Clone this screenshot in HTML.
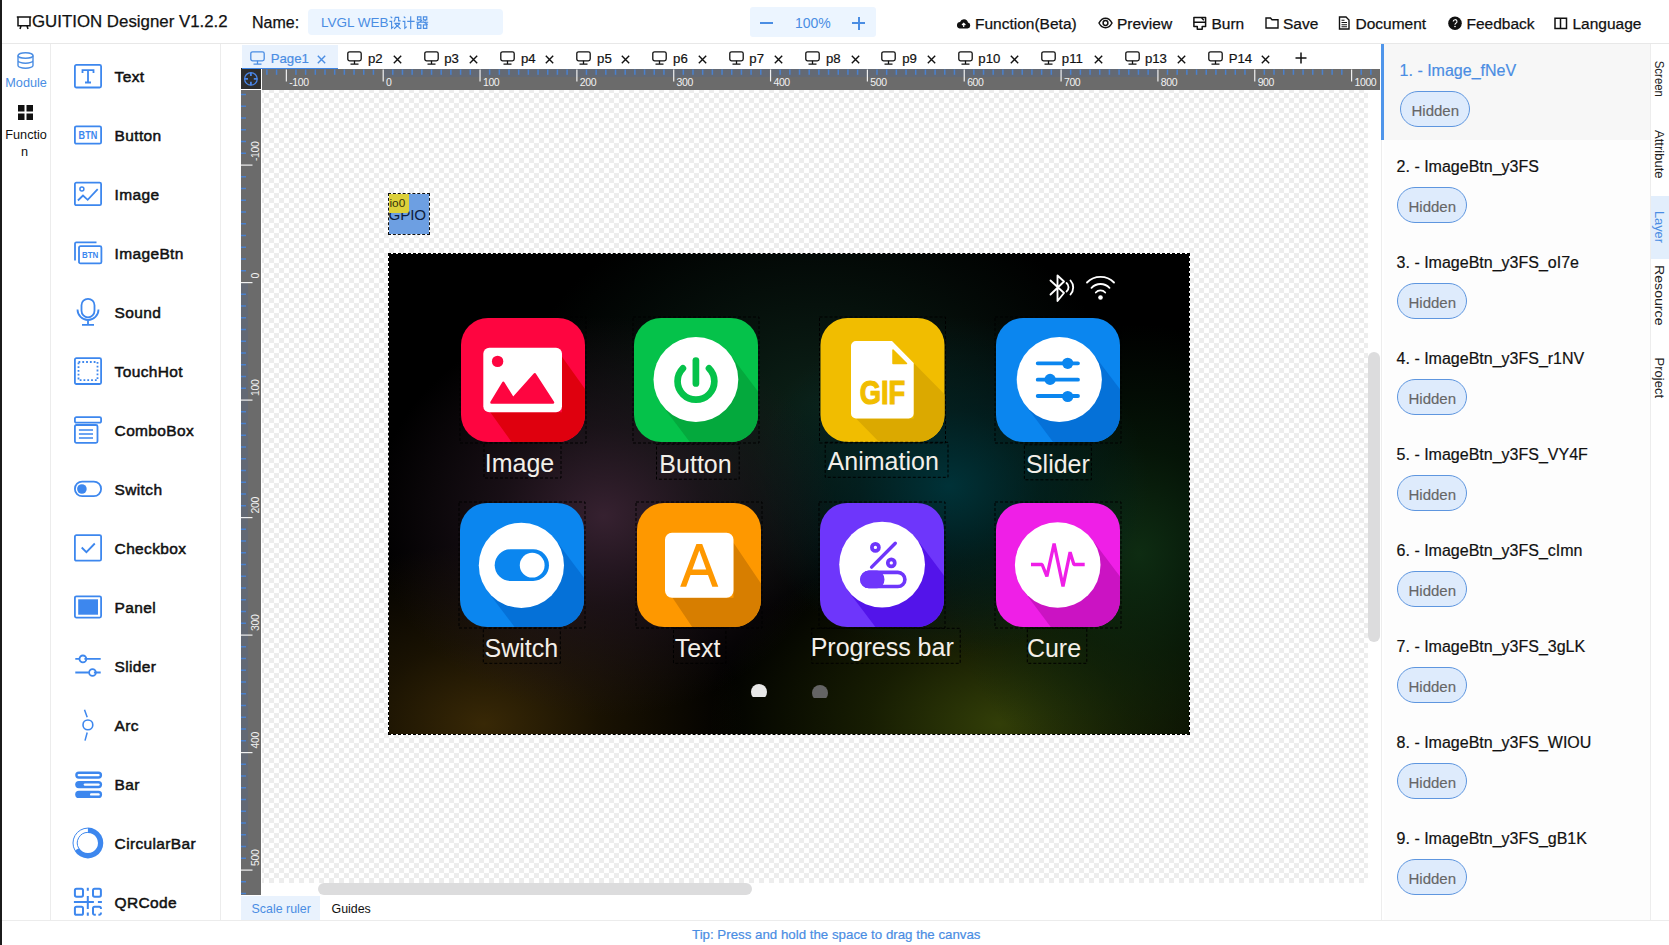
<!DOCTYPE html>
<html><head><meta charset="utf-8">
<style>
*{box-sizing:border-box;margin:0;padding:0}
html,body{width:1669px;height:945px;overflow:hidden;background:#fff;font-family:"Liberation Sans",sans-serif;color:#1a1a1a}
.a{position:absolute}
.t{position:absolute;white-space:nowrap;line-height:1}
svg{position:absolute;overflow:visible}
</style></head><body>
<div class="a" style="left:0px;top:0px;width:1.5px;height:945px;background:#1b1b1b;"></div>
<div class="a" style="left:2px;top:43px;width:1667px;height:1px;background:#e8e8e8;"></div>
<svg style="left:16px;top:16px" width="16" height="14" viewBox="0 0 16 14"><path d="M0.8 0.9H15.2M2 0.9V9.8H14V0.9M5 10L4 13M11 10L12 13" fill="none" stroke="#111" stroke-width="1.5"/></svg>
<div class="t" style="left:32px;top:14px;font-size:16.85px;color:#111;font-weight:400;-webkit-text-stroke:0.25px #111">GUITION Designer V1.2.2</div>
<div class="t" style="left:252px;top:15px;font-size:16px;color:#111;font-weight:400;-webkit-text-stroke:0.25px #111">Name:</div>
<div class="a" style="left:308px;top:9px;width:195px;height:26px;background:#ecf5ff;border-radius:4px"></div>
<div class="t" style="left:321px;top:16.3px;font-size:13.5px;color:#4a8de3;font-weight:400;">LVGL WEB</div>
<svg style="left:387px;top:15px" width="44" height="16" viewBox="0 0 44 16"><g fill="none" stroke="#4a8de3" stroke-width="1.15" stroke-linecap="butt"><path d="M3.6 1.6L5.2 3.2M2.4 6.3H4.6V13.3L6.6 11.6M8 2.6V4.9L6.9 6.6M8 2.4H11.6V5.8H13.6M7.4 8.3H13.1M8.2 8.8L13.6 13.8M12.7 8.8L7.1 13.8"/><path d="M16.8 1.6L18.4 3.2M15.6 6.3H17.8V13.3L19.8 11.6M20.2 6.3H27.6M23.7 1.2V14"/><path d="M30.5 1.9H33.9V4.9H30.5ZM36.4 1.9H39.8V4.9H36.4ZM30.5 9.9H33.9V13.4H30.5ZM36.4 9.9H39.8V13.4H36.4ZM29.3 7.2H41.2M35.1 5.2L29.6 9.4M35.7 6.6L40.8 9.4M37.6 5.2L38.6 6.2"/></g></svg>
<div class="a" style="left:750px;top:7px;width:126px;height:30px;background:#ecf5ff;border-radius:3px"></div>
<div class="a" style="left:760px;top:22px;width:13px;height:2px;background:#4a8de3;"></div>
<div class="t" style="left:795px;top:16px;font-size:14px;color:#4a8de3;font-weight:400;">100%</div>
<div class="a" style="left:852px;top:22px;width:13px;height:2px;background:#4a8de3;"></div>
<div class="a" style="left:857.5px;top:16.5px;width:2px;height:13px;background:#4a8de3;"></div>
<svg style="left:956px;top:17px" width="15" height="14" viewBox="0 0 15 14"><path d="M3.5 11.5H11.5A3 3 0 0 0 12 5.6A4.2 4.2 0 0 0 4 5A3.3 3.3 0 0 0 3.5 11.5Z" fill="#111"/><path d="M7.7 6.5V10M6 8L7.7 6.3L9.4 8" stroke="#fff" stroke-width="1.2" fill="none"/></svg>
<div class="t" style="left:975px;top:15.8px;font-size:15.5px;color:#111;font-weight:400;-webkit-text-stroke:0.25px #111">Function(Beta)</div>
<svg style="left:1098px;top:16px" width="15" height="14" viewBox="0 0 15 14"><path d="M1 7C3 3.2 5 2.2 7.5 2.2S12 3.2 14 7C12 10.8 10 11.8 7.5 11.8S3 10.8 1 7Z" fill="none" stroke="#111" stroke-width="1.5"/><circle cx="7.5" cy="7" r="2.4" fill="none" stroke="#111" stroke-width="1.5"/></svg>
<div class="t" style="left:1117px;top:15.8px;font-size:15.5px;color:#111;font-weight:400;-webkit-text-stroke:0.25px #111">Preview</div>
<svg style="left:1193px;top:16px" width="15" height="14" viewBox="0 0 15 14"><path d="M0.9 1.6H12.6V10.4H9.2V13.2H4.3V10.4H0.9Z" fill="none" stroke="#111" stroke-width="1.5" stroke-linejoin="round"/><path d="M0.9 6.2H12.6M8.6 1.8L10.8 4.2" fill="none" stroke="#111" stroke-width="1.4"/></svg>
<div class="t" style="left:1211.5px;top:15.8px;font-size:15.5px;color:#111;font-weight:400;-webkit-text-stroke:0.25px #111">Burn</div>
<svg style="left:1265px;top:16px" width="15" height="14" viewBox="0 0 15 14"><path d="M1 2H5.5L7 3.8H13V12H1Z" fill="none" stroke="#111" stroke-width="1.4"/></svg>
<div class="t" style="left:1283px;top:15.8px;font-size:15.5px;color:#111;font-weight:400;-webkit-text-stroke:0.25px #111">Save</div>
<svg style="left:1338px;top:16px" width="15" height="14" viewBox="0 0 15 14"><path d="M1.5 1H8L11 4V13H1.5Z" fill="none" stroke="#111" stroke-width="1.4"/><path d="M3.5 6.5H9M3.5 8.7H9M3.5 10.8H9M3.5 4.3H6.5" stroke="#111" stroke-width="1.1"/></svg>
<div class="t" style="left:1355.5px;top:15.8px;font-size:15.5px;color:#111;font-weight:400;-webkit-text-stroke:0.25px #111">Document</div>
<svg style="left:1448px;top:16px" width="15" height="14" viewBox="0 0 15 14"><circle cx="7" cy="7.2" r="6.8" fill="#111"/><path d="M5.2 5.6A1.9 1.9 0 1 1 7.6 7.4C7.1 7.7 7 8 7 8.8" fill="none" stroke="#fff" stroke-width="1.1"/><circle cx="7" cy="10.5" r="0.8" fill="#fff"/></svg>
<div class="t" style="left:1466.5px;top:15.8px;font-size:15.5px;color:#111;font-weight:400;-webkit-text-stroke:0.25px #111">Feedback</div>
<svg style="left:1554px;top:16px" width="15" height="14" viewBox="0 0 15 14"><path d="M1 2.2H6.5V12.5H1Z M6.5 2.2H12.5V12.5H6.5" fill="none" stroke="#111" stroke-width="1.5"/></svg>
<div class="t" style="left:1572.5px;top:15.8px;font-size:15.5px;color:#111;font-weight:400;-webkit-text-stroke:0.25px #111">Language</div>
<div class="a" style="left:50px;top:44px;width:1px;height:876px;background:#ececec;"></div>
<div class="a" style="left:220px;top:44px;width:1px;height:876px;background:#ececec;"></div>
<div class="a" style="left:2px;top:920px;width:1667px;height:1px;background:#ececec;"></div>
<div class="t" style="left:692px;top:928px;font-size:13.3px;color:#4a8de3;font-weight:400;-webkit-text-stroke:0.2px #4a8de3">Tip: Press and hold the space to drag the canvas</div>
<svg style="left:17px;top:52px" width="17" height="17" viewBox="0 0 17 17"><g fill="none" stroke="#4a8de3" stroke-width="1.4"><ellipse cx="8.5" cy="3.5" rx="7.5" ry="2.8"/><path d="M1 3.5V13.5C1 15 4.4 16.3 8.5 16.3S16 15 16 13.5V3.5M1 8.5C1 10 4.4 11.3 8.5 11.3S16 10 16 8.5"/></g></svg>
<div class="t" style="left:5.3px;top:76.5px;font-size:12.7px;color:#4a8de3;font-weight:400;">Module</div>
<svg style="left:18px;top:104.5px" width="15" height="15" viewBox="0 0 15 15"><rect x="0" y="0" width="6.5" height="6.5" fill="#111"/><rect x="8.5" y="0" width="6.5" height="6.5" fill="#111"/><rect x="0" y="8.5" width="6.5" height="6.5" fill="#111"/><rect x="8.5" y="8.5" width="6.5" height="6.5" fill="#111"/></svg>
<div class="t" style="left:5.3px;top:128.5px;font-size:12.7px;color:#111;font-weight:400;">Functio</div>
<div class="t" style="left:21px;top:146px;font-size:12.7px;color:#111;font-weight:400;">n</div>
<svg style="left:74px;top:64px" width="28" height="24" viewBox="0 0 28 24"><rect x="0.9" y="0.9" width="26.2" height="22.6" rx="1.5" fill="none" stroke="#3d87ee" stroke-width="1.8"/><path d="M8.5 9V6.2H19.5V9M14 6.2V18.5M11 18.5H17" fill="none" stroke="#3d87ee" stroke-width="1.8"/></svg>
<div class="t" style="left:114.6px;top:69.2px;font-size:15.5px;color:#111;font-weight:400;-webkit-text-stroke:0.5px #111;letter-spacing:0.35px">Text</div>
<svg style="left:74px;top:123px" width="28" height="24" viewBox="0 0 28 24"><rect x="0.9" y="3.3" width="26.2" height="17.4" rx="1.5" fill="none" stroke="#3d87ee" stroke-width="1.8"/><text x="4.6" y="15.6" font-family="Liberation Sans" font-weight="700" font-size="10.3" fill="#3d87ee" textLength="18.6" lengthAdjust="spacingAndGlyphs">BTN</text></svg>
<div class="t" style="left:114.6px;top:128.2px;font-size:15.5px;color:#111;font-weight:400;-webkit-text-stroke:0.5px #111;letter-spacing:0.35px">Button</div>
<svg style="left:74px;top:182px" width="28" height="24" viewBox="0 0 28 24"><rect x="0.9" y="0.6" width="26.2" height="22.6" rx="1.5" fill="none" stroke="#3d87ee" stroke-width="1.8"/><circle cx="7.9" cy="6.9" r="2" fill="none" stroke="#3d87ee" stroke-width="1.5"/><path d="M3.9 18.5L9 13.6L13.7 17.8L23.7 7.2" fill="none" stroke="#3d87ee" stroke-width="1.8"/></svg>
<div class="t" style="left:114.6px;top:187.2px;font-size:15.5px;color:#111;font-weight:400;-webkit-text-stroke:0.5px #111;letter-spacing:0.35px">Image</div>
<svg style="left:74px;top:241px" width="28" height="24" viewBox="0 0 28 24"><path d="M1 19.5V2.5A1.3 1.3 0 0 1 2.3 1.3H22.5" fill="none" stroke="#3d87ee" stroke-width="1.8"/><rect x="5" y="5.2" width="22.4" height="17.2" rx="1.5" fill="none" stroke="#3d87ee" stroke-width="1.8"/><text x="7.9" y="17.2" font-family="Liberation Sans" font-weight="700" font-size="9.8" fill="#3d87ee" textLength="16.4" lengthAdjust="spacingAndGlyphs">BTN</text></svg>
<div class="t" style="left:114.6px;top:246.2px;font-size:15.5px;color:#111;font-weight:400;-webkit-text-stroke:0.5px #111;letter-spacing:0.35px">ImageBtn</div>
<svg style="left:74px;top:300px" width="28" height="24" viewBox="0 0 28 24"><rect x="7.5" y="-1.2" width="13" height="18.5" rx="6.5" fill="none" stroke="#3d87ee" stroke-width="1.8"/><path d="M3.5 9.5A10.5 10.5 0 0 0 24.5 9.5M14 20V24.5M8 24.8H20" fill="none" stroke="#3d87ee" stroke-width="1.8"/></svg>
<div class="t" style="left:114.6px;top:305.2px;font-size:15.5px;color:#111;font-weight:400;-webkit-text-stroke:0.5px #111;letter-spacing:0.35px">Sound</div>
<svg style="left:74px;top:359px" width="28" height="24" viewBox="0 0 28 24"><rect x="0.9" y="-0.8" width="26.2" height="25.8" rx="1.5" fill="none" stroke="#3d87ee" stroke-width="1.8"/><rect x="4.5" y="3" width="19" height="18.2" fill="none" stroke="#3d87ee" stroke-width="1.8" stroke-dasharray="1.8 2"/></svg>
<div class="t" style="left:114.6px;top:364.2px;font-size:15.5px;color:#111;font-weight:400;-webkit-text-stroke:0.5px #111;letter-spacing:0.35px">TouchHot</div>
<svg style="left:74px;top:418px" width="28" height="24" viewBox="0 0 28 24"><rect x="0.9" y="-0.9" width="26.2" height="5.6" rx="1.5" fill="none" stroke="#3d87ee" stroke-width="1.8"/><rect x="0.9" y="7" width="22.6" height="17.8" rx="1.5" fill="none" stroke="#3d87ee" stroke-width="1.8"/><path d="M4.9 12H19M4.9 16H19M4.9 20H19" fill="none" stroke="#3d87ee" stroke-width="1.6"/></svg>
<div class="t" style="left:114.6px;top:423.2px;font-size:15.5px;color:#111;font-weight:400;-webkit-text-stroke:0.5px #111;letter-spacing:0.35px">ComboBox</div>
<svg style="left:74px;top:477px" width="28" height="24" viewBox="0 0 28 24"><rect x="0.9" y="4.6" width="26.2" height="14.6" rx="7.3" fill="none" stroke="#3d87ee" stroke-width="1.8"/><circle cx="7.9" cy="12" r="4.8" fill="#3d87ee"/></svg>
<div class="t" style="left:114.6px;top:482.2px;font-size:15.5px;color:#111;font-weight:400;-webkit-text-stroke:0.5px #111;letter-spacing:0.35px">Switch</div>
<svg style="left:74px;top:536px" width="28" height="24" viewBox="0 0 28 24"><rect x="0.9" y="-0.9" width="26.2" height="25.6" rx="1.5" fill="none" stroke="#3d87ee" stroke-width="1.8"/><path d="M7.7 11.5L12.4 16.2L20.8 7.5" fill="none" stroke="#3d87ee" stroke-width="1.8"/></svg>
<div class="t" style="left:114.6px;top:541.2px;font-size:15.5px;color:#111;font-weight:400;-webkit-text-stroke:0.5px #111;letter-spacing:0.35px">Checkbox</div>
<svg style="left:74px;top:595px" width="28" height="24" viewBox="0 0 28 24"><rect x="0.9" y="1.3" width="26.2" height="21.3" rx="1.5" fill="none" stroke="#3d87ee" stroke-width="1.8"/><rect x="4.2" y="4.3" width="19.8" height="15.4" fill="#3d87ee"/></svg>
<div class="t" style="left:114.6px;top:600.2px;font-size:15.5px;color:#111;font-weight:400;-webkit-text-stroke:0.5px #111;letter-spacing:0.35px">Panel</div>
<svg style="left:74px;top:654px" width="28" height="24" viewBox="0 0 28 24"><path d="M1.3 4.9H5.4M10.4 4.9H26.7M1.3 18.5H14.8M19.9 18.5H26.7" fill="none" stroke="#3d87ee" stroke-width="1.8"/><circle cx="8.9" cy="4.9" r="3.4" fill="none" stroke="#3d87ee" stroke-width="1.8"/><circle cx="18.5" cy="18.5" r="3.4" fill="none" stroke="#3d87ee" stroke-width="1.8"/></svg>
<div class="t" style="left:114.6px;top:659.2px;font-size:15.5px;color:#111;font-weight:400;-webkit-text-stroke:0.5px #111;letter-spacing:0.35px">Slider</div>
<svg style="left:74px;top:713px" width="28" height="24" viewBox="0 0 28 24"><path d="M10.5 -3.3L13.2 4.3M13.2 19.5L11 27.6" fill="none" stroke="#3d87ee" stroke-width="1.5"/><circle cx="13.9" cy="11.9" r="4.9" fill="none" stroke="#3d87ee" stroke-width="1.6"/></svg>
<div class="t" style="left:114.6px;top:718.2px;font-size:15.5px;color:#111;font-weight:400;-webkit-text-stroke:0.5px #111;letter-spacing:0.35px">Arc</div>
<svg style="left:74px;top:772px" width="28" height="24" viewBox="0 0 28 24"><rect x="1.2" y="-0.5" width="26.9" height="7.2" rx="3.6" fill="#3d87ee"/><rect x="3.6" y="1.9" width="22.1" height="2.4" rx="1.2" fill="#fff"/><rect x="1.2" y="9" width="26.9" height="7.2" rx="3.6" fill="#3d87ee"/><rect x="9.7" y="11.4" width="16" height="2.4" rx="1.2" fill="#fff"/><rect x="1.2" y="18.8" width="26.9" height="7.2" rx="3.6" fill="#3d87ee"/><rect x="16" y="21.2" width="9.7" height="2.4" rx="1.2" fill="#fff"/></svg>
<div class="t" style="left:114.6px;top:777.2px;font-size:15.5px;color:#111;font-weight:400;-webkit-text-stroke:0.5px #111;letter-spacing:0.35px">Bar</div>
<svg style="left:74px;top:831px" width="28" height="24" viewBox="0 0 28 24"><path d="M13.9 -3.4000000000000004A15.4 15.4 0 1 1 0.56 19.70L5.15 17.05A10.1 10.1 0 1 0 13.9 1.9000000000000004Z" fill="#3d87ee"/><path d="M1.00 19.45A14.9 14.9 0 0 1 13.9 -2.9000000000000004M4.72 17.30A10.6 10.6 0 0 1 13.9 1.4000000000000004" fill="none" stroke="#3d87ee" stroke-width="1"/></svg>
<div class="t" style="left:114.6px;top:836.2px;font-size:15.5px;color:#111;font-weight:400;-webkit-text-stroke:0.5px #111;letter-spacing:0.35px">CircularBar</div>
<svg style="left:74px;top:890px" width="28" height="24" viewBox="0 0 28 24"><rect x="0.9" y="-1.2" width="8.1" height="7.9" rx="1.6" fill="none" stroke="#3d87ee" stroke-width="2"/><rect x="19" y="-1.2" width="7.9" height="7.9" rx="1.6" fill="none" stroke="#3d87ee" stroke-width="2"/><rect x="0.9" y="16.7" width="8.1" height="8.1" rx="1.6" fill="none" stroke="#3d87ee" stroke-width="2"/><path d="M26.9 19V18.3A1.6 1.6 0 0 0 25.3 16.7H20.6A1.6 1.6 0 0 0 19 18.3V23.2A1.6 1.6 0 0 0 20.6 24.8H21.8M24.4 24.8H25.3A1.6 1.6 0 0 0 26.9 23.2V22.4M13.8 -2.2V0.8M13.8 6V19M13.8 22.5V25.8M-0.1 11.9H19.9M23.9 11.9H27.9" fill="none" stroke="#3d87ee" stroke-width="2"/></svg>
<div class="t" style="left:114.6px;top:895.2px;font-size:15.5px;color:#111;font-weight:400;-webkit-text-stroke:0.5px #111;letter-spacing:0.35px">QRCode</div>
<div class="a" style="left:241.5px;top:45px;width:96.5px;height:23.5px;background:#e9f2fd;"></div>
<svg style="left:250px;top:50.5px" width="15" height="14" viewBox="0 0 15 14"><g fill="none" stroke="#4a8de3" stroke-width="1.3"><rect x="0.8" y="0.8" width="13.4" height="9" rx="1.8"/><path d="M7.5 9.8V13M3.5 13.1H11.5"/></g></svg>
<div class="t" style="left:270.7px;top:52px;font-size:13.2px;color:#4a8de3;font-weight:400;-webkit-text-stroke:0.2px #4a8de3">Page1</div>
<svg style="left:316.7px;top:54.5px" width="9" height="9" viewBox="0 0 9 9"><path d="M0.8 0.8L8.2 8.2M8.2 0.8L0.8 8.2" stroke="#4a8de3" stroke-width="1.4"/></svg>
<svg style="left:347.4px;top:50.5px" width="15" height="14" viewBox="0 0 15 14"><g fill="none" stroke="#111" stroke-width="1.3"><rect x="0.8" y="0.8" width="13.4" height="9" rx="1.8"/><path d="M7.5 9.8V13M3.5 13.1H11.5"/></g></svg>
<div class="t" style="left:368px;top:52px;font-size:13.2px;color:#111;font-weight:400;-webkit-text-stroke:0.2px #111">p2</div>
<svg style="left:393.4px;top:54.5px" width="9" height="9" viewBox="0 0 9 9"><path d="M0.8 0.8L8.2 8.2M8.2 0.8L0.8 8.2" stroke="#111" stroke-width="1.4"/></svg>
<svg style="left:423.7px;top:50.5px" width="15" height="14" viewBox="0 0 15 14"><g fill="none" stroke="#111" stroke-width="1.3"><rect x="0.8" y="0.8" width="13.4" height="9" rx="1.8"/><path d="M7.5 9.8V13M3.5 13.1H11.5"/></g></svg>
<div class="t" style="left:444.2px;top:52px;font-size:13.2px;color:#111;font-weight:400;-webkit-text-stroke:0.2px #111">p3</div>
<svg style="left:469.1px;top:54.5px" width="9" height="9" viewBox="0 0 9 9"><path d="M0.8 0.8L8.2 8.2M8.2 0.8L0.8 8.2" stroke="#111" stroke-width="1.4"/></svg>
<svg style="left:499.8px;top:50.5px" width="15" height="14" viewBox="0 0 15 14"><g fill="none" stroke="#111" stroke-width="1.3"><rect x="0.8" y="0.8" width="13.4" height="9" rx="1.8"/><path d="M7.5 9.8V13M3.5 13.1H11.5"/></g></svg>
<div class="t" style="left:520.9px;top:52px;font-size:13.2px;color:#111;font-weight:400;-webkit-text-stroke:0.2px #111">p4</div>
<svg style="left:544.8px;top:54.5px" width="9" height="9" viewBox="0 0 9 9"><path d="M0.8 0.8L8.2 8.2M8.2 0.8L0.8 8.2" stroke="#111" stroke-width="1.4"/></svg>
<svg style="left:576.3px;top:50.5px" width="15" height="14" viewBox="0 0 15 14"><g fill="none" stroke="#111" stroke-width="1.3"><rect x="0.8" y="0.8" width="13.4" height="9" rx="1.8"/><path d="M7.5 9.8V13M3.5 13.1H11.5"/></g></svg>
<div class="t" style="left:597.1px;top:52px;font-size:13.2px;color:#111;font-weight:400;-webkit-text-stroke:0.2px #111">p5</div>
<svg style="left:621.1px;top:54.5px" width="9" height="9" viewBox="0 0 9 9"><path d="M0.8 0.8L8.2 8.2M8.2 0.8L0.8 8.2" stroke="#111" stroke-width="1.4"/></svg>
<svg style="left:652.3px;top:50.5px" width="15" height="14" viewBox="0 0 15 14"><g fill="none" stroke="#111" stroke-width="1.3"><rect x="0.8" y="0.8" width="13.4" height="9" rx="1.8"/><path d="M7.5 9.8V13M3.5 13.1H11.5"/></g></svg>
<div class="t" style="left:673.1px;top:52px;font-size:13.2px;color:#111;font-weight:400;-webkit-text-stroke:0.2px #111">p6</div>
<svg style="left:697.8px;top:54.5px" width="9" height="9" viewBox="0 0 9 9"><path d="M0.8 0.8L8.2 8.2M8.2 0.8L0.8 8.2" stroke="#111" stroke-width="1.4"/></svg>
<svg style="left:729px;top:50.5px" width="15" height="14" viewBox="0 0 15 14"><g fill="none" stroke="#111" stroke-width="1.3"><rect x="0.8" y="0.8" width="13.4" height="9" rx="1.8"/><path d="M7.5 9.8V13M3.5 13.1H11.5"/></g></svg>
<div class="t" style="left:749.3px;top:52px;font-size:13.2px;color:#111;font-weight:400;-webkit-text-stroke:0.2px #111">p7</div>
<svg style="left:774px;top:54.5px" width="9" height="9" viewBox="0 0 9 9"><path d="M0.8 0.8L8.2 8.2M8.2 0.8L0.8 8.2" stroke="#111" stroke-width="1.4"/></svg>
<svg style="left:805px;top:50.5px" width="15" height="14" viewBox="0 0 15 14"><g fill="none" stroke="#111" stroke-width="1.3"><rect x="0.8" y="0.8" width="13.4" height="9" rx="1.8"/><path d="M7.5 9.8V13M3.5 13.1H11.5"/></g></svg>
<div class="t" style="left:826px;top:52px;font-size:13.2px;color:#111;font-weight:400;-webkit-text-stroke:0.2px #111">p8</div>
<svg style="left:850.5px;top:54.5px" width="9" height="9" viewBox="0 0 9 9"><path d="M0.8 0.8L8.2 8.2M8.2 0.8L0.8 8.2" stroke="#111" stroke-width="1.4"/></svg>
<svg style="left:881.2px;top:50.5px" width="15" height="14" viewBox="0 0 15 14"><g fill="none" stroke="#111" stroke-width="1.3"><rect x="0.8" y="0.8" width="13.4" height="9" rx="1.8"/><path d="M7.5 9.8V13M3.5 13.1H11.5"/></g></svg>
<div class="t" style="left:902.2px;top:52px;font-size:13.2px;color:#111;font-weight:400;-webkit-text-stroke:0.2px #111">p9</div>
<svg style="left:926.7px;top:54.5px" width="9" height="9" viewBox="0 0 9 9"><path d="M0.8 0.8L8.2 8.2M8.2 0.8L0.8 8.2" stroke="#111" stroke-width="1.4"/></svg>
<svg style="left:958.2px;top:50.5px" width="15" height="14" viewBox="0 0 15 14"><g fill="none" stroke="#111" stroke-width="1.3"><rect x="0.8" y="0.8" width="13.4" height="9" rx="1.8"/><path d="M7.5 9.8V13M3.5 13.1H11.5"/></g></svg>
<div class="t" style="left:978.3px;top:52px;font-size:13.2px;color:#111;font-weight:400;-webkit-text-stroke:0.2px #111">p10</div>
<svg style="left:1010.1px;top:54.5px" width="9" height="9" viewBox="0 0 9 9"><path d="M0.8 0.8L8.2 8.2M8.2 0.8L0.8 8.2" stroke="#111" stroke-width="1.4"/></svg>
<svg style="left:1041.3px;top:50.5px" width="15" height="14" viewBox="0 0 15 14"><g fill="none" stroke="#111" stroke-width="1.3"><rect x="0.8" y="0.8" width="13.4" height="9" rx="1.8"/><path d="M7.5 9.8V13M3.5 13.1H11.5"/></g></svg>
<div class="t" style="left:1061.8px;top:52px;font-size:13.2px;color:#111;font-weight:400;-webkit-text-stroke:0.2px #111">p11</div>
<svg style="left:1093.7px;top:54.5px" width="9" height="9" viewBox="0 0 9 9"><path d="M0.8 0.8L8.2 8.2M8.2 0.8L0.8 8.2" stroke="#111" stroke-width="1.4"/></svg>
<svg style="left:1124.9px;top:50.5px" width="15" height="14" viewBox="0 0 15 14"><g fill="none" stroke="#111" stroke-width="1.3"><rect x="0.8" y="0.8" width="13.4" height="9" rx="1.8"/><path d="M7.5 9.8V13M3.5 13.1H11.5"/></g></svg>
<div class="t" style="left:1144.9px;top:52px;font-size:13.2px;color:#111;font-weight:400;-webkit-text-stroke:0.2px #111">p13</div>
<svg style="left:1177.3px;top:54.5px" width="9" height="9" viewBox="0 0 9 9"><path d="M0.8 0.8L8.2 8.2M8.2 0.8L0.8 8.2" stroke="#111" stroke-width="1.4"/></svg>
<svg style="left:1208.2px;top:50.5px" width="15" height="14" viewBox="0 0 15 14"><g fill="none" stroke="#111" stroke-width="1.3"><rect x="0.8" y="0.8" width="13.4" height="9" rx="1.8"/><path d="M7.5 9.8V13M3.5 13.1H11.5"/></g></svg>
<div class="t" style="left:1228.7px;top:52px;font-size:13.2px;color:#111;font-weight:400;-webkit-text-stroke:0.2px #111">P14</div>
<svg style="left:1261px;top:54.5px" width="9" height="9" viewBox="0 0 9 9"><path d="M0.8 0.8L8.2 8.2M8.2 0.8L0.8 8.2" stroke="#111" stroke-width="1.4"/></svg>
<svg style="left:1295px;top:51.5px" width="12" height="12" viewBox="0 0 12 12"><path d="M6 0.5V11.5M0.5 6H11.5" stroke="#111" stroke-width="1.5"/></svg>
<div class="a" style="left:241px;top:68px;width:20px;height:21px;background:#2e2e2e;"></div>
<svg style="left:243px;top:71px" width="16" height="16" viewBox="0 0 16 16"><circle cx="7.9" cy="7.9" r="6.3" fill="none" stroke="#4a86e8" stroke-width="1.3"/><path d="M7.9 1.5V5M7.9 10.8V14.3M1.5 7.9H5M10.8 7.9H14.3" stroke="#4a86e8" stroke-width="1.8"/></svg>
<div class="a" style="left:262px;top:68.5px;width:1118px;height:21.5px;background:#6b6b6b;"></div>
<div class="a" style="left:383.1px;top:68.5px;width:774.7px;height:8px;background:rgba(60,100,170,0.16);"></div>
<div class="a" style="left:241px;top:90px;width:20px;height:805px;background:#6b6b6b;"></div>
<div class="a" style="left:241px;top:282.5px;width:7px;height:565px;background:rgba(60,100,170,0.16);"></div>
<svg style="left:262px;top:68.5px" width="1118" height="21.5" viewBox="0 0 1118 21.5"><rect x="4.14" y="0.5" width="1.5" height="5.3" fill="#4a80cc"/><rect x="13.83" y="0.5" width="1.5" height="5.3" fill="#4a80cc"/><rect x="23.76" y="0.5" width="1.2" height="12" fill="#f0f0f0"/><text x="27.26" y="17.3" font-family="Liberation Sans" font-size="10.5" fill="#f2f2f2" letter-spacing="-0.4">-100</text><rect x="33.19" y="0.5" width="1.5" height="5.3" fill="#4a80cc"/><rect x="42.88" y="0.5" width="1.5" height="5.3" fill="#4a80cc"/><rect x="52.56" y="0.5" width="1.5" height="5.3" fill="#4a80cc"/><rect x="62.25" y="0.5" width="1.5" height="5.3" fill="#4a80cc"/><rect x="71.93" y="0.5" width="1.5" height="5.3" fill="#4a80cc"/><rect x="81.61" y="0.5" width="1.5" height="5.3" fill="#4a80cc"/><rect x="91.30" y="0.5" width="1.5" height="5.3" fill="#4a80cc"/><rect x="100.98" y="0.5" width="1.5" height="5.3" fill="#4a80cc"/><rect x="110.67" y="0.5" width="1.5" height="5.3" fill="#4a80cc"/><rect x="120.60" y="0.5" width="1.2" height="12" fill="#f0f0f0"/><text x="124.10" y="17.3" font-family="Liberation Sans" font-size="10.5" fill="#f2f2f2" letter-spacing="-0.4">0</text><rect x="130.03" y="0.5" width="1.5" height="5.3" fill="#4a80cc"/><rect x="139.72" y="0.5" width="1.5" height="5.3" fill="#4a80cc"/><rect x="149.40" y="0.5" width="1.5" height="5.3" fill="#4a80cc"/><rect x="159.09" y="0.5" width="1.5" height="5.3" fill="#4a80cc"/><rect x="168.77" y="0.5" width="1.5" height="5.3" fill="#4a80cc"/><rect x="178.45" y="0.5" width="1.5" height="5.3" fill="#4a80cc"/><rect x="188.14" y="0.5" width="1.5" height="5.3" fill="#4a80cc"/><rect x="197.82" y="0.5" width="1.5" height="5.3" fill="#4a80cc"/><rect x="207.51" y="0.5" width="1.5" height="5.3" fill="#4a80cc"/><rect x="217.44" y="0.5" width="1.2" height="12" fill="#f0f0f0"/><text x="220.94" y="17.3" font-family="Liberation Sans" font-size="10.5" fill="#f2f2f2" letter-spacing="-0.4">100</text><rect x="226.87" y="0.5" width="1.5" height="5.3" fill="#4a80cc"/><rect x="236.56" y="0.5" width="1.5" height="5.3" fill="#4a80cc"/><rect x="246.24" y="0.5" width="1.5" height="5.3" fill="#4a80cc"/><rect x="255.93" y="0.5" width="1.5" height="5.3" fill="#4a80cc"/><rect x="265.61" y="0.5" width="1.5" height="5.3" fill="#4a80cc"/><rect x="275.29" y="0.5" width="1.5" height="5.3" fill="#4a80cc"/><rect x="284.98" y="0.5" width="1.5" height="5.3" fill="#4a80cc"/><rect x="294.66" y="0.5" width="1.5" height="5.3" fill="#4a80cc"/><rect x="304.35" y="0.5" width="1.5" height="5.3" fill="#4a80cc"/><rect x="314.28" y="0.5" width="1.2" height="12" fill="#f0f0f0"/><text x="317.78" y="17.3" font-family="Liberation Sans" font-size="10.5" fill="#f2f2f2" letter-spacing="-0.4">200</text><rect x="323.71" y="0.5" width="1.5" height="5.3" fill="#4a80cc"/><rect x="333.40" y="0.5" width="1.5" height="5.3" fill="#4a80cc"/><rect x="343.08" y="0.5" width="1.5" height="5.3" fill="#4a80cc"/><rect x="352.77" y="0.5" width="1.5" height="5.3" fill="#4a80cc"/><rect x="362.45" y="0.5" width="1.5" height="5.3" fill="#4a80cc"/><rect x="372.13" y="0.5" width="1.5" height="5.3" fill="#4a80cc"/><rect x="381.82" y="0.5" width="1.5" height="5.3" fill="#4a80cc"/><rect x="391.50" y="0.5" width="1.5" height="5.3" fill="#4a80cc"/><rect x="401.19" y="0.5" width="1.5" height="5.3" fill="#4a80cc"/><rect x="411.12" y="0.5" width="1.2" height="12" fill="#f0f0f0"/><text x="414.62" y="17.3" font-family="Liberation Sans" font-size="10.5" fill="#f2f2f2" letter-spacing="-0.4">300</text><rect x="420.55" y="0.5" width="1.5" height="5.3" fill="#4a80cc"/><rect x="430.24" y="0.5" width="1.5" height="5.3" fill="#4a80cc"/><rect x="439.92" y="0.5" width="1.5" height="5.3" fill="#4a80cc"/><rect x="449.61" y="0.5" width="1.5" height="5.3" fill="#4a80cc"/><rect x="459.29" y="0.5" width="1.5" height="5.3" fill="#4a80cc"/><rect x="468.97" y="0.5" width="1.5" height="5.3" fill="#4a80cc"/><rect x="478.66" y="0.5" width="1.5" height="5.3" fill="#4a80cc"/><rect x="488.34" y="0.5" width="1.5" height="5.3" fill="#4a80cc"/><rect x="498.03" y="0.5" width="1.5" height="5.3" fill="#4a80cc"/><rect x="507.96" y="0.5" width="1.2" height="12" fill="#f0f0f0"/><text x="511.46" y="17.3" font-family="Liberation Sans" font-size="10.5" fill="#f2f2f2" letter-spacing="-0.4">400</text><rect x="517.39" y="0.5" width="1.5" height="5.3" fill="#4a80cc"/><rect x="527.08" y="0.5" width="1.5" height="5.3" fill="#4a80cc"/><rect x="536.76" y="0.5" width="1.5" height="5.3" fill="#4a80cc"/><rect x="546.45" y="0.5" width="1.5" height="5.3" fill="#4a80cc"/><rect x="556.13" y="0.5" width="1.5" height="5.3" fill="#4a80cc"/><rect x="565.81" y="0.5" width="1.5" height="5.3" fill="#4a80cc"/><rect x="575.50" y="0.5" width="1.5" height="5.3" fill="#4a80cc"/><rect x="585.18" y="0.5" width="1.5" height="5.3" fill="#4a80cc"/><rect x="594.87" y="0.5" width="1.5" height="5.3" fill="#4a80cc"/><rect x="604.80" y="0.5" width="1.2" height="12" fill="#f0f0f0"/><text x="608.30" y="17.3" font-family="Liberation Sans" font-size="10.5" fill="#f2f2f2" letter-spacing="-0.4">500</text><rect x="614.23" y="0.5" width="1.5" height="5.3" fill="#4a80cc"/><rect x="623.92" y="0.5" width="1.5" height="5.3" fill="#4a80cc"/><rect x="633.60" y="0.5" width="1.5" height="5.3" fill="#4a80cc"/><rect x="643.29" y="0.5" width="1.5" height="5.3" fill="#4a80cc"/><rect x="652.97" y="0.5" width="1.5" height="5.3" fill="#4a80cc"/><rect x="662.65" y="0.5" width="1.5" height="5.3" fill="#4a80cc"/><rect x="672.34" y="0.5" width="1.5" height="5.3" fill="#4a80cc"/><rect x="682.02" y="0.5" width="1.5" height="5.3" fill="#4a80cc"/><rect x="691.71" y="0.5" width="1.5" height="5.3" fill="#4a80cc"/><rect x="701.64" y="0.5" width="1.2" height="12" fill="#f0f0f0"/><text x="705.14" y="17.3" font-family="Liberation Sans" font-size="10.5" fill="#f2f2f2" letter-spacing="-0.4">600</text><rect x="711.07" y="0.5" width="1.5" height="5.3" fill="#4a80cc"/><rect x="720.76" y="0.5" width="1.5" height="5.3" fill="#4a80cc"/><rect x="730.44" y="0.5" width="1.5" height="5.3" fill="#4a80cc"/><rect x="740.13" y="0.5" width="1.5" height="5.3" fill="#4a80cc"/><rect x="749.81" y="0.5" width="1.5" height="5.3" fill="#4a80cc"/><rect x="759.49" y="0.5" width="1.5" height="5.3" fill="#4a80cc"/><rect x="769.18" y="0.5" width="1.5" height="5.3" fill="#4a80cc"/><rect x="778.86" y="0.5" width="1.5" height="5.3" fill="#4a80cc"/><rect x="788.55" y="0.5" width="1.5" height="5.3" fill="#4a80cc"/><rect x="798.48" y="0.5" width="1.2" height="12" fill="#f0f0f0"/><text x="801.98" y="17.3" font-family="Liberation Sans" font-size="10.5" fill="#f2f2f2" letter-spacing="-0.4">700</text><rect x="807.91" y="0.5" width="1.5" height="5.3" fill="#4a80cc"/><rect x="817.60" y="0.5" width="1.5" height="5.3" fill="#4a80cc"/><rect x="827.28" y="0.5" width="1.5" height="5.3" fill="#4a80cc"/><rect x="836.97" y="0.5" width="1.5" height="5.3" fill="#4a80cc"/><rect x="846.65" y="0.5" width="1.5" height="5.3" fill="#4a80cc"/><rect x="856.33" y="0.5" width="1.5" height="5.3" fill="#4a80cc"/><rect x="866.02" y="0.5" width="1.5" height="5.3" fill="#4a80cc"/><rect x="875.70" y="0.5" width="1.5" height="5.3" fill="#4a80cc"/><rect x="885.39" y="0.5" width="1.5" height="5.3" fill="#4a80cc"/><rect x="895.32" y="0.5" width="1.2" height="12" fill="#f0f0f0"/><text x="898.82" y="17.3" font-family="Liberation Sans" font-size="10.5" fill="#f2f2f2" letter-spacing="-0.4">800</text><rect x="904.75" y="0.5" width="1.5" height="5.3" fill="#4a80cc"/><rect x="914.44" y="0.5" width="1.5" height="5.3" fill="#4a80cc"/><rect x="924.12" y="0.5" width="1.5" height="5.3" fill="#4a80cc"/><rect x="933.81" y="0.5" width="1.5" height="5.3" fill="#4a80cc"/><rect x="943.49" y="0.5" width="1.5" height="5.3" fill="#4a80cc"/><rect x="953.17" y="0.5" width="1.5" height="5.3" fill="#4a80cc"/><rect x="962.86" y="0.5" width="1.5" height="5.3" fill="#4a80cc"/><rect x="972.54" y="0.5" width="1.5" height="5.3" fill="#4a80cc"/><rect x="982.23" y="0.5" width="1.5" height="5.3" fill="#4a80cc"/><rect x="992.16" y="0.5" width="1.2" height="12" fill="#f0f0f0"/><text x="995.66" y="17.3" font-family="Liberation Sans" font-size="10.5" fill="#f2f2f2" letter-spacing="-0.4">900</text><rect x="1001.59" y="0.5" width="1.5" height="5.3" fill="#4a80cc"/><rect x="1011.28" y="0.5" width="1.5" height="5.3" fill="#4a80cc"/><rect x="1020.96" y="0.5" width="1.5" height="5.3" fill="#4a80cc"/><rect x="1030.65" y="0.5" width="1.5" height="5.3" fill="#4a80cc"/><rect x="1040.33" y="0.5" width="1.5" height="5.3" fill="#4a80cc"/><rect x="1050.01" y="0.5" width="1.5" height="5.3" fill="#4a80cc"/><rect x="1059.70" y="0.5" width="1.5" height="5.3" fill="#4a80cc"/><rect x="1069.38" y="0.5" width="1.5" height="5.3" fill="#4a80cc"/><rect x="1079.07" y="0.5" width="1.5" height="5.3" fill="#4a80cc"/><rect x="1089.00" y="0.5" width="1.2" height="12" fill="#f0f0f0"/><text x="1092.50" y="17.3" font-family="Liberation Sans" font-size="10.5" fill="#f2f2f2" letter-spacing="-0.4">1000</text><rect x="1098.43" y="0.5" width="1.5" height="5.3" fill="#4a80cc"/><rect x="1108.12" y="0.5" width="1.5" height="5.3" fill="#4a80cc"/></svg>
<div class="a" style="left:241.5px;top:68px;width:96.3px;height:1.3px;background:#3f86e6;"></div>
<svg style="left:241px;top:90px" width="20" height="805" viewBox="0 0 20 805"><rect x="0" y="3.75" width="5" height="1.5" fill="#4a80cc"/><rect x="0" y="15.50" width="5" height="1.5" fill="#4a80cc"/><rect x="0" y="27.25" width="5" height="1.5" fill="#4a80cc"/><rect x="0" y="39.00" width="5" height="1.5" fill="#4a80cc"/><rect x="0" y="50.75" width="5" height="1.5" fill="#4a80cc"/><rect x="0" y="62.50" width="5" height="1.5" fill="#4a80cc"/><rect x="0" y="74.50" width="11.5" height="1.2" fill="#f0f0f0"/><text transform="translate(17.8 71.00) rotate(-90)" font-family="Liberation Sans" font-size="10.5" fill="#f2f2f2" letter-spacing="-0.4">-100</text><rect x="0" y="86.00" width="5" height="1.5" fill="#4a80cc"/><rect x="0" y="97.75" width="5" height="1.5" fill="#4a80cc"/><rect x="0" y="109.50" width="5" height="1.5" fill="#4a80cc"/><rect x="0" y="121.25" width="5" height="1.5" fill="#4a80cc"/><rect x="0" y="133.00" width="5" height="1.5" fill="#4a80cc"/><rect x="0" y="144.75" width="5" height="1.5" fill="#4a80cc"/><rect x="0" y="156.50" width="5" height="1.5" fill="#4a80cc"/><rect x="0" y="168.25" width="5" height="1.5" fill="#4a80cc"/><rect x="0" y="180.00" width="5" height="1.5" fill="#4a80cc"/><rect x="0" y="192.00" width="11.5" height="1.2" fill="#f0f0f0"/><text transform="translate(17.8 188.50) rotate(-90)" font-family="Liberation Sans" font-size="10.5" fill="#f2f2f2" letter-spacing="-0.4">0</text><rect x="0" y="203.50" width="5" height="1.5" fill="#4a80cc"/><rect x="0" y="215.25" width="5" height="1.5" fill="#4a80cc"/><rect x="0" y="227.00" width="5" height="1.5" fill="#4a80cc"/><rect x="0" y="238.75" width="5" height="1.5" fill="#4a80cc"/><rect x="0" y="250.50" width="5" height="1.5" fill="#4a80cc"/><rect x="0" y="262.25" width="5" height="1.5" fill="#4a80cc"/><rect x="0" y="274.00" width="5" height="1.5" fill="#4a80cc"/><rect x="0" y="285.75" width="5" height="1.5" fill="#4a80cc"/><rect x="0" y="297.50" width="5" height="1.5" fill="#4a80cc"/><rect x="0" y="309.50" width="11.5" height="1.2" fill="#f0f0f0"/><text transform="translate(17.8 306.00) rotate(-90)" font-family="Liberation Sans" font-size="10.5" fill="#f2f2f2" letter-spacing="-0.4">100</text><rect x="0" y="321.00" width="5" height="1.5" fill="#4a80cc"/><rect x="0" y="332.75" width="5" height="1.5" fill="#4a80cc"/><rect x="0" y="344.50" width="5" height="1.5" fill="#4a80cc"/><rect x="0" y="356.25" width="5" height="1.5" fill="#4a80cc"/><rect x="0" y="368.00" width="5" height="1.5" fill="#4a80cc"/><rect x="0" y="379.75" width="5" height="1.5" fill="#4a80cc"/><rect x="0" y="391.50" width="5" height="1.5" fill="#4a80cc"/><rect x="0" y="403.25" width="5" height="1.5" fill="#4a80cc"/><rect x="0" y="415.00" width="5" height="1.5" fill="#4a80cc"/><rect x="0" y="427.00" width="11.5" height="1.2" fill="#f0f0f0"/><text transform="translate(17.8 423.50) rotate(-90)" font-family="Liberation Sans" font-size="10.5" fill="#f2f2f2" letter-spacing="-0.4">200</text><rect x="0" y="438.50" width="5" height="1.5" fill="#4a80cc"/><rect x="0" y="450.25" width="5" height="1.5" fill="#4a80cc"/><rect x="0" y="462.00" width="5" height="1.5" fill="#4a80cc"/><rect x="0" y="473.75" width="5" height="1.5" fill="#4a80cc"/><rect x="0" y="485.50" width="5" height="1.5" fill="#4a80cc"/><rect x="0" y="497.25" width="5" height="1.5" fill="#4a80cc"/><rect x="0" y="509.00" width="5" height="1.5" fill="#4a80cc"/><rect x="0" y="520.75" width="5" height="1.5" fill="#4a80cc"/><rect x="0" y="532.50" width="5" height="1.5" fill="#4a80cc"/><rect x="0" y="544.50" width="11.5" height="1.2" fill="#f0f0f0"/><text transform="translate(17.8 541.00) rotate(-90)" font-family="Liberation Sans" font-size="10.5" fill="#f2f2f2" letter-spacing="-0.4">300</text><rect x="0" y="556.00" width="5" height="1.5" fill="#4a80cc"/><rect x="0" y="567.75" width="5" height="1.5" fill="#4a80cc"/><rect x="0" y="579.50" width="5" height="1.5" fill="#4a80cc"/><rect x="0" y="591.25" width="5" height="1.5" fill="#4a80cc"/><rect x="0" y="603.00" width="5" height="1.5" fill="#4a80cc"/><rect x="0" y="614.75" width="5" height="1.5" fill="#4a80cc"/><rect x="0" y="626.50" width="5" height="1.5" fill="#4a80cc"/><rect x="0" y="638.25" width="5" height="1.5" fill="#4a80cc"/><rect x="0" y="650.00" width="5" height="1.5" fill="#4a80cc"/><rect x="0" y="662.00" width="11.5" height="1.2" fill="#f0f0f0"/><text transform="translate(17.8 658.50) rotate(-90)" font-family="Liberation Sans" font-size="10.5" fill="#f2f2f2" letter-spacing="-0.4">400</text><rect x="0" y="673.50" width="5" height="1.5" fill="#4a80cc"/><rect x="0" y="685.25" width="5" height="1.5" fill="#4a80cc"/><rect x="0" y="697.00" width="5" height="1.5" fill="#4a80cc"/><rect x="0" y="708.75" width="5" height="1.5" fill="#4a80cc"/><rect x="0" y="720.50" width="5" height="1.5" fill="#4a80cc"/><rect x="0" y="732.25" width="5" height="1.5" fill="#4a80cc"/><rect x="0" y="744.00" width="5" height="1.5" fill="#4a80cc"/><rect x="0" y="755.75" width="5" height="1.5" fill="#4a80cc"/><rect x="0" y="767.50" width="5" height="1.5" fill="#4a80cc"/><rect x="0" y="779.50" width="11.5" height="1.2" fill="#f0f0f0"/><text transform="translate(17.8 776.00) rotate(-90)" font-family="Liberation Sans" font-size="10.5" fill="#f2f2f2" letter-spacing="-0.4">500</text><rect x="0" y="791.00" width="5" height="1.5" fill="#4a80cc"/><rect x="0" y="802.75" width="5" height="1.5" fill="#4a80cc"/></svg>
<div class="a" style="left:262px;top:90px;width:1106px;height:793px;background:#fff;background-image:repeating-conic-gradient(#ededed 0 25%,#ffffff 0 50%);background-size:10px 10px;background-position:2px 8px"></div>
<div class="a" style="left:1368px;top:352px;width:12px;height:290px;background:#dcdcdd;border-radius:6px"></div>
<div class="a" style="left:318px;top:883px;width:434px;height:12px;background:#dcdcdd;border-radius:6px"></div>
<div class="a" style="left:241px;top:896px;width:79px;height:24px;background:#e9f2fd;"></div>
<div class="t" style="left:251.6px;top:903px;font-size:12.4px;color:#4a8de3;font-weight:400;">Scale ruler</div>
<div class="t" style="left:331.5px;top:903px;font-size:12.4px;color:#111;font-weight:400;">Guides</div>
<div class="a" style="left:388px;top:193px;width:42px;height:42px;background:#6d9fe2;border:1px solid #fff"></div>
<div class="a" style="left:388px;top:193px;width:42px;height:42px;background:transparent;border:1px dashed #111"></div>
<div class="t" style="left:388.5px;top:206.5px;font-size:15.2px;color:#0d1d40;font-weight:400;letter-spacing:-0.1px">GPIO</div>
<div class="a" style="left:389px;top:194px;width:19.5px;height:18.5px;background:#dcd03a;border-radius:0 0 2px 0"></div>
<div class="t" style="left:389.5px;top:197.5px;font-size:11.8px;color:#33300c;font-weight:400;">io0</div>
<div class="a" style="left:388px;top:253px;width:802px;height:482px;background:#000;background:radial-gradient(ellipse 230px 200px at 215px 262px, rgba(54,33,48,1) 0, rgba(40,25,36,0.6) 45%, rgba(0,0,0,0) 100%),radial-gradient(ellipse 200px 170px at 560px 232px, rgba(0,50,56,1) 0, rgba(0,40,44,0.55) 45%, rgba(0,0,0,0) 100%),radial-gradient(ellipse 200px 230px at 750px 300px, rgba(14,44,18,1) 0, rgba(10,38,14,0.55) 45%, rgba(0,0,0,0) 100%),radial-gradient(ellipse 290px 190px at 610px 470px, rgba(50,62,8,1) 0, rgba(38,48,4,0.6) 45%, rgba(0,0,0,0) 100%),radial-gradient(ellipse 260px 180px at 95px 470px, rgba(56,40,6,1) 0, rgba(42,30,4,0.6) 45%, rgba(0,0,0,0) 100%),radial-gradient(ellipse 300px 210px at 430px 150px, rgba(12,34,24,0.95) 0, rgba(0,0,0,0) 100%),#000;border:1px solid #fff"></div>
<div class="a" style="left:388px;top:253px;width:802px;height:482px;background:transparent;border:1px dashed #000;background:transparent"></div>
<svg style="left:388px;top:253px" width="802" height="482" viewBox="388 253 802 482"><defs><clipPath id="c0"><path d="M488 318H558A27 27 0 0 1 585 345V415A27 27 0 0 1 558 442H488A27 27 0 0 1 461 415V345A27 27 0 0 1 488 318Z"/></clipPath><clipPath id="c1"><path d="M661 318H731A27 27 0 0 1 758 345V415A27 27 0 0 1 731 442H661A27 27 0 0 1 634 415V345A27 27 0 0 1 661 318Z"/></clipPath><clipPath id="c2"><path d="M847.5 318H917.5A27 27 0 0 1 944.5 345V415A27 27 0 0 1 917.5 442H847.5A27 27 0 0 1 820.5 415V345A27 27 0 0 1 847.5 318Z"/></clipPath><clipPath id="c3"><path d="M1023 318H1093A27 27 0 0 1 1120 345V415A27 27 0 0 1 1093 442H1023A27 27 0 0 1 996 415V345A27 27 0 0 1 1023 318Z"/></clipPath><clipPath id="c4"><path d="M487 503H557A27 27 0 0 1 584 530V600A27 27 0 0 1 557 627H487A27 27 0 0 1 460 600V530A27 27 0 0 1 487 503Z"/></clipPath><clipPath id="c5"><path d="M664 503H734A27 27 0 0 1 761 530V600A27 27 0 0 1 734 627H664A27 27 0 0 1 637 600V530A27 27 0 0 1 664 503Z"/></clipPath><clipPath id="c6"><path d="M847 503H917A27 27 0 0 1 944 530V600A27 27 0 0 1 917 627H847A27 27 0 0 1 820 600V530A27 27 0 0 1 847 503Z"/></clipPath><clipPath id="c7"><path d="M1023 503H1093A27 27 0 0 1 1120 530V600A27 27 0 0 1 1093 627H1023A27 27 0 0 1 996 600V530A27 27 0 0 1 1023 503Z"/></clipPath><clipPath id="dc"><rect x="740" y="670" width="100" height="27"/></clipPath><clipPath id="dc2"><rect x="800" y="670" width="40" height="28"/></clipPath></defs><path d="M488 318H558A27 27 0 0 1 585 345V415A27 27 0 0 1 558 442H488A27 27 0 0 1 461 415V345A27 27 0 0 1 488 318Z" fill="#fe0540"/><path d="M562.0 356.7 L689.8 535.8 L618.1 591.3 L490.3 412.2 L562.0 412.2Z" fill="#df000e" clip-path="url(#c0)"/><rect x="483.3" y="347.7" width="78.7" height="64.5" rx="6" fill="#fff"/><circle cx="497.6" cy="361.4" r="5.7" fill="#fe0540"/><path d="M491.5 402.5L503.3 382.8L513 398.5L534.7 374.3L553 402.5Z" fill="#fe0540" stroke="#fe0540" stroke-width="2.5" stroke-linejoin="round"/><rect x="460" y="317" width="126" height="126" fill="none" stroke="#000" stroke-width="1" stroke-dasharray="3 2"/><path d="M661 318H731A27 27 0 0 1 758 345V415A27 27 0 0 1 731 442H661A27 27 0 0 1 634 415V345A27 27 0 0 1 661 318Z" fill="#05c24a"/><path d="M729.7 354.0 L850.0 513.7 L782.3 564.7 L661.9 405.0Z" fill="#04a93d" clip-path="url(#c1)"/><circle cx="695.9" cy="379.5" r="42.4" fill="#fff"/><path d="M682.9 368.3A18.4 18.4 0 1 0 709 368.3" fill="none" stroke="#05c24a" stroke-width="6.7" stroke-linecap="round"/><path d="M695.9 360.5V383.5" stroke="#05c24a" stroke-width="6.7" stroke-linecap="round"/><rect x="633" y="317" width="126" height="126" fill="none" stroke="#000" stroke-width="1" stroke-dasharray="3 2"/><path d="M847.5 318H917.5A27 27 0 0 1 944.5 345V415A27 27 0 0 1 917.5 442H847.5A27 27 0 0 1 820.5 415V345A27 27 0 0 1 847.5 318Z" fill="#f1bd00"/><path d="M913.7 363.0 L1067.9 519.9 L1010.2 575.4 L856.0 418.5 L913.7 418.5Z" fill="#dba900" clip-path="url(#c2)"/><path d="M851 346A5 5 0 0 1 856 341H892L913.7 363V413.5A5 5 0 0 1 908.7 418.5H856A5 5 0 0 1 851 413.5Z" fill="#fff"/><path d="M893 350V363.5H906.5Z" fill="#f1bd00" stroke="#f1bd00" stroke-width="1.5" stroke-linejoin="round"/><text x="859.8" y="403.6" font-family="Liberation Sans" font-weight="700" font-size="33.5" fill="#f1bd00" stroke="#f1bd00" stroke-width="1.2" textLength="45.5" lengthAdjust="spacingAndGlyphs">GIF</text><rect x="819.5" y="317" width="126" height="126" fill="none" stroke="#000" stroke-width="1" stroke-dasharray="3 2"/><path d="M1023 318H1093A27 27 0 0 1 1120 345V415A27 27 0 0 1 1093 442H1023A27 27 0 0 1 996 415V345A27 27 0 0 1 1023 318Z" fill="#0b86ef"/><path d="M1093.3 353.9 L1213.7 513.6 L1145.6 564.9 L1025.3 405.1Z" fill="#0571d8" clip-path="url(#c3)"/><circle cx="1059.3" cy="379.5" r="42.6" fill="#fff"/><path d="M1037.7 363.3H1078M1037.7 379.7H1078M1037.7 396H1078" stroke="#0b86ef" stroke-width="3.8" stroke-linecap="round"/><circle cx="1067.7" cy="363.3" r="5.6" fill="#0b86ef"/><circle cx="1050.1" cy="379.4" r="5.6" fill="#0b86ef"/><circle cx="1067.7" cy="396.5" r="5.6" fill="#0b86ef"/><rect x="995" y="317" width="126" height="126" fill="none" stroke="#000" stroke-width="1" stroke-dasharray="3 2"/><path d="M487 503H557A27 27 0 0 1 584 530V600A27 27 0 0 1 557 627H487A27 27 0 0 1 460 600V530A27 27 0 0 1 487 503Z" fill="#0b86ef"/><path d="M555.4 539.7 L675.8 699.4 L607.7 750.7 L487.4 590.9Z" fill="#0571d8" clip-path="url(#c4)"/><circle cx="521.4" cy="565.3" r="42.6" fill="#fff"/><rect x="494.7" y="549.3" width="54.3" height="31.7" rx="15.85" fill="#0b86ef"/><circle cx="532.2" cy="565.2" r="12.4" fill="#fff"/><rect x="459" y="502" width="126" height="126" fill="none" stroke="#000" stroke-width="1" stroke-dasharray="3 2"/><path d="M664 503H734A27 27 0 0 1 761 530V600A27 27 0 0 1 734 627H664A27 27 0 0 1 637 600V530A27 27 0 0 1 664 503Z" fill="#fe9800"/><path d="M733.5 542.7 L856.5 725.1 L795.5 780.2 L672.5 597.8 L733.5 597.8Z" fill="#d77e00" clip-path="url(#c5)"/><rect x="665" y="532.7" width="68.5" height="65.1" rx="7" fill="#fff"/><path d="M680.2 586.8L696.4 544.1H702.2L718.3 586.8H712.3L708 575H690.5L686.2 586.8Z M692.4 569.5H706.2L699.3 550.5Z" fill="#fe9800" fill-rule="evenodd"/><rect x="636" y="502" width="126" height="126" fill="none" stroke="#000" stroke-width="1" stroke-dasharray="3 2"/><path d="M847 503H917A27 27 0 0 1 944 530V600A27 27 0 0 1 917 627H847A27 27 0 0 1 820 600V530A27 27 0 0 1 847 503Z" fill="#6e36fb"/><path d="M916.4 538.8 L1036.7 698.5 L968.2 750.1 L847.8 590.4Z" fill="#5314ea" clip-path="url(#c6)"/><circle cx="882.1" cy="564.6" r="42.9" fill="#fff"/><circle cx="875.4" cy="547.4" r="3.5" fill="none" stroke="#6e36fb" stroke-width="3.7"/><circle cx="891.3" cy="562.9" r="3.5" fill="none" stroke="#6e36fb" stroke-width="3.7"/><path d="M871.6 567.1L895.3 543.3" stroke="#6e36fb" stroke-width="3.4" stroke-linecap="round"/><rect x="861.9" y="572.4" width="43" height="14.1" rx="7.05" fill="none" stroke="#6e36fb" stroke-width="3.6"/><path d="M868.9 570.6H877A7.5 8.85 0 0 1 877 588.3H868.9A8.85 8.85 0 0 1 868.9 570.6Z" fill="#6e36fb"/><rect x="819" y="502" width="126" height="126" fill="none" stroke="#000" stroke-width="1" stroke-dasharray="3 2"/><path d="M1023 503H1093A27 27 0 0 1 1120 530V600A27 27 0 0 1 1093 627H1023A27 27 0 0 1 996 600V530A27 27 0 0 1 1023 503Z" fill="#ef1fe7"/><path d="M1091.9 539.2 L1212.2 699.0 L1143.9 750.5 L1023.5 590.8Z" fill="#cb13c3" clip-path="url(#c7)"/><circle cx="1057.7" cy="565" r="42.8" fill="#fff"/><path d="M1031 564.5H1042.1L1046.9 576.3L1054.1 543.6L1063 586.3L1070.1 552.2L1073.9 564.5H1084.7" fill="none" stroke="#ef1fe7" stroke-width="3.3" stroke-linejoin="bevel"/><rect x="995" y="502" width="126" height="126" fill="none" stroke="#000" stroke-width="1" stroke-dasharray="3 2"/><rect x="484" y="443" width="77" height="35" fill="none" stroke="#000" stroke-width="1" stroke-dasharray="3 2"/><text x="519.5" y="471.8" text-anchor="middle" font-family="Liberation Sans" font-size="25" fill="#f3efe9" textLength="" >Image</text><rect x="656.5" y="444.2" width="82.7" height="35" fill="none" stroke="#000" stroke-width="1" stroke-dasharray="3 2"/><text x="695.5" y="472.8" text-anchor="middle" font-family="Liberation Sans" font-size="25" fill="#f3efe9" textLength="" >Button</text><rect x="825.2" y="442.3" width="122.8" height="35" fill="none" stroke="#000" stroke-width="1" stroke-dasharray="3 2"/><text x="883.2" y="469.9" text-anchor="middle" font-family="Liberation Sans" font-size="25" fill="#f3efe9" textLength="" >Animation</text><rect x="1024.4" y="444.8" width="67" height="35" fill="none" stroke="#000" stroke-width="1" stroke-dasharray="3 2"/><text x="1057.9" y="473" text-anchor="middle" font-family="Liberation Sans" font-size="25" fill="#f3efe9" textLength="" >Slider</text><rect x="483.3" y="628.3" width="77" height="35" fill="none" stroke="#000" stroke-width="1" stroke-dasharray="3 2"/><text x="521.4" y="656.8" text-anchor="middle" font-family="Liberation Sans" font-size="25" fill="#f3efe9" textLength="" >Switch</text><rect x="673.5" y="628.3" width="52.4" height="35" fill="none" stroke="#000" stroke-width="1" stroke-dasharray="3 2"/><text x="697.6" y="656.8" text-anchor="middle" font-family="Liberation Sans" font-size="25" fill="#f3efe9" textLength="" >Text</text><rect x="811.7" y="628.3" width="148.5" height="35" fill="none" stroke="#000" stroke-width="1" stroke-dasharray="3 2"/><text x="882.2" y="656" text-anchor="middle" font-family="Liberation Sans" font-size="25" fill="#f3efe9" textLength="" >Progress bar</text><rect x="1027.3" y="628.3" width="59.5" height="35" fill="none" stroke="#000" stroke-width="1" stroke-dasharray="3 2"/><text x="1054" y="656.8" text-anchor="middle" font-family="Liberation Sans" font-size="25" fill="#f3efe9" textLength="" >Cure</text><g fill="none" stroke="#fff" stroke-width="1.85" stroke-linejoin="round" stroke-linecap="round"><path d="M1050.5 280.5L1064 293L1057.5 301V275.5L1064 281.5L1050.5 294.5"/><path d="M1066.5 283A5.5 5.5 0 0 1 1066.5 291.5M1070.5 280.5A10.5 10.5 0 0 1 1070.5 294.5"/><path d="M1087 282.5A19 19 0 0 1 1114 282.5M1091.5 287.8A12.5 12.5 0 0 1 1109.5 287.8M1095.8 292.5A6.2 6.2 0 0 1 1105.2 292.5"/></g><circle cx="1100.5" cy="297.5" r="2.3" fill="#fff"/><circle cx="759" cy="692" r="8" fill="#e8e8e8" clip-path="url(#dc)"/><circle cx="820" cy="693" r="8" fill="#646464" clip-path="url(#dc2)"/></svg>
<div class="a" style="left:1381px;top:44px;width:3px;height:96px;background:#4f95ea;"></div>
<div class="a" style="left:1384px;top:44px;width:266px;height:96px;background:#f7f7f7;"></div>
<div class="a" style="left:1384px;top:140px;width:266px;height:780px;background:#fdfdfd;"></div>
<div class="a" style="left:1381px;top:140px;width:1px;height:780px;background:#ededed;"></div>
<div class="a" style="left:1650px;top:44px;width:1px;height:876px;background:#ededed;"></div>
<div class="t" style="left:1399.6px;top:62.5px;font-size:16px;color:#4a8de3;font-weight:400;-webkit-text-stroke:0.2px #4a8de3">1. - Image_fNeV</div>
<div class="a" style="left:1400.2px;top:91.3px;width:69.5px;height:35.3px;background:#deebfc;border:1px solid #5e96df;border-radius:18px"></div>
<div class="t" style="left:1411.5px;top:103px;font-size:15px;color:#666;font-weight:400;-webkit-text-stroke:0.15px #666">Hidden</div>
<div class="t" style="left:1396.6px;top:158.5px;font-size:16px;color:#111;font-weight:400;-webkit-text-stroke:0.2px #111">2. - ImageBtn_y3FS</div>
<div class="a" style="left:1397.2px;top:187.3px;width:69.5px;height:35.3px;background:#deebfc;border:1px solid #5e96df;border-radius:18px"></div>
<div class="t" style="left:1408.5px;top:199px;font-size:15px;color:#666;font-weight:400;-webkit-text-stroke:0.15px #666">Hidden</div>
<div class="t" style="left:1396.6px;top:254.5px;font-size:16px;color:#111;font-weight:400;-webkit-text-stroke:0.2px #111">3. - ImageBtn_y3FS_oI7e</div>
<div class="a" style="left:1397.2px;top:283.3px;width:69.5px;height:35.3px;background:#deebfc;border:1px solid #5e96df;border-radius:18px"></div>
<div class="t" style="left:1408.5px;top:295px;font-size:15px;color:#666;font-weight:400;-webkit-text-stroke:0.15px #666">Hidden</div>
<div class="t" style="left:1396.6px;top:350.5px;font-size:16px;color:#111;font-weight:400;-webkit-text-stroke:0.2px #111">4. - ImageBtn_y3FS_r1NV</div>
<div class="a" style="left:1397.2px;top:379.3px;width:69.5px;height:35.3px;background:#deebfc;border:1px solid #5e96df;border-radius:18px"></div>
<div class="t" style="left:1408.5px;top:391px;font-size:15px;color:#666;font-weight:400;-webkit-text-stroke:0.15px #666">Hidden</div>
<div class="t" style="left:1396.6px;top:446.5px;font-size:16px;color:#111;font-weight:400;-webkit-text-stroke:0.2px #111">5. - ImageBtn_y3FS_VY4F</div>
<div class="a" style="left:1397.2px;top:475.3px;width:69.5px;height:35.3px;background:#deebfc;border:1px solid #5e96df;border-radius:18px"></div>
<div class="t" style="left:1408.5px;top:487px;font-size:15px;color:#666;font-weight:400;-webkit-text-stroke:0.15px #666">Hidden</div>
<div class="t" style="left:1396.6px;top:542.5px;font-size:16px;color:#111;font-weight:400;-webkit-text-stroke:0.2px #111">6. - ImageBtn_y3FS_cImn</div>
<div class="a" style="left:1397.2px;top:571.3px;width:69.5px;height:35.3px;background:#deebfc;border:1px solid #5e96df;border-radius:18px"></div>
<div class="t" style="left:1408.5px;top:583px;font-size:15px;color:#666;font-weight:400;-webkit-text-stroke:0.15px #666">Hidden</div>
<div class="t" style="left:1396.6px;top:638.5px;font-size:16px;color:#111;font-weight:400;-webkit-text-stroke:0.2px #111">7. - ImageBtn_y3FS_3gLK</div>
<div class="a" style="left:1397.2px;top:667.3px;width:69.5px;height:35.3px;background:#deebfc;border:1px solid #5e96df;border-radius:18px"></div>
<div class="t" style="left:1408.5px;top:679px;font-size:15px;color:#666;font-weight:400;-webkit-text-stroke:0.15px #666">Hidden</div>
<div class="t" style="left:1396.6px;top:734.5px;font-size:16px;color:#111;font-weight:400;-webkit-text-stroke:0.2px #111">8. - ImageBtn_y3FS_WIOU</div>
<div class="a" style="left:1397.2px;top:763.3px;width:69.5px;height:35.3px;background:#deebfc;border:1px solid #5e96df;border-radius:18px"></div>
<div class="t" style="left:1408.5px;top:775px;font-size:15px;color:#666;font-weight:400;-webkit-text-stroke:0.15px #666">Hidden</div>
<div class="t" style="left:1396.6px;top:830.5px;font-size:16px;color:#111;font-weight:400;-webkit-text-stroke:0.2px #111">9. - ImageBtn_y3FS_gB1K</div>
<div class="a" style="left:1397.2px;top:859.3px;width:69.5px;height:35.3px;background:#deebfc;border:1px solid #5e96df;border-radius:18px"></div>
<div class="t" style="left:1408.5px;top:871px;font-size:15px;color:#666;font-weight:400;-webkit-text-stroke:0.15px #666">Hidden</div>
<div class="a" style="left:1651px;top:196px;width:18px;height:63px;background:#e2eefc;"></div>
<svg style="left:1651px;top:44px" width="18" height="380" viewBox="0 0 18 380"><text transform="translate(3.6 16.7) rotate(90)" font-family="Liberation Sans" font-size="13.5" fill="#222" textLength="36.3" lengthAdjust="spacingAndGlyphs">Screen</text><text transform="translate(3.6 86.0) rotate(90)" font-family="Liberation Sans" font-size="13.5" fill="#222" textLength="48.5" lengthAdjust="spacingAndGlyphs">Attribute</text><text transform="translate(3.6 166.9) rotate(90)" font-family="Liberation Sans" font-size="13.5" fill="#4a8de3" textLength="32.1" lengthAdjust="spacingAndGlyphs">Layer</text><text transform="translate(3.6 221.0) rotate(90)" font-family="Liberation Sans" font-size="13.5" fill="#222" textLength="60.5" lengthAdjust="spacingAndGlyphs">Resource</text><text transform="translate(3.6 313.6) rotate(90)" font-family="Liberation Sans" font-size="13.5" fill="#222" textLength="40.4" lengthAdjust="spacingAndGlyphs">Project</text></svg></body></html>
